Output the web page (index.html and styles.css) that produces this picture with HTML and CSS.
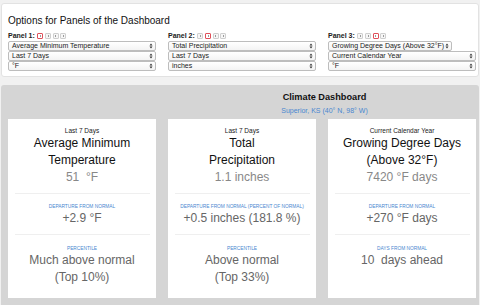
FILE: index.html
```html
<!DOCTYPE html>
<html>
<head>
<meta charset="utf-8">
<link rel="stylesheet" href="styles.css">
</head>
<body>
<div class="options">
  <h1 class="opt-title">Options for Panels of the Dashboard</h1>
  <div class="opt-grid">
    <div class="opt-col">
      <div class="panel-row"><span class="panel-label">Panel 1:</span><span class="btns"><span class="btn sel"><i></i></span><span class="btn"><i></i></span><span class="btn"><i></i></span><span class="btn"><i></i></span></span></div>
      <div class="sel-box">Average Minimum Temperature<svg class="arr" viewBox="0 0 4 6" width="4" height="6"><path d="M0.5 2.5 L2 0.5 L3.5 2.5 Z M0.5 3.5 L2 5.5 L3.5 3.5 Z"/></svg></div>
      <div class="sel-box">Last 7 Days<svg class="arr" viewBox="0 0 4 6" width="4" height="6"><path d="M0.5 2.5 L2 0.5 L3.5 2.5 Z M0.5 3.5 L2 5.5 L3.5 3.5 Z"/></svg></div>
      <div class="sel-box">°F<svg class="arr" viewBox="0 0 4 6" width="4" height="6"><path d="M0.5 2.5 L2 0.5 L3.5 2.5 Z M0.5 3.5 L2 5.5 L3.5 3.5 Z"/></svg></div>
    </div>
    <div class="opt-col">
      <div class="panel-row"><span class="panel-label">Panel 2:</span><span class="btns"><span class="btn"><i></i></span><span class="btn sel"><i></i></span><span class="btn"><i></i></span><span class="btn"><i></i></span></span></div>
      <div class="sel-box">Total Precipitation<svg class="arr" viewBox="0 0 4 6" width="4" height="6"><path d="M0.5 2.5 L2 0.5 L3.5 2.5 Z M0.5 3.5 L2 5.5 L3.5 3.5 Z"/></svg></div>
      <div class="sel-box">Last 7 Days<svg class="arr" viewBox="0 0 4 6" width="4" height="6"><path d="M0.5 2.5 L2 0.5 L3.5 2.5 Z M0.5 3.5 L2 5.5 L3.5 3.5 Z"/></svg></div>
      <div class="sel-box">inches<svg class="arr" viewBox="0 0 4 6" width="4" height="6"><path d="M0.5 2.5 L2 0.5 L3.5 2.5 Z M0.5 3.5 L2 5.5 L3.5 3.5 Z"/></svg></div>
    </div>
    <div class="opt-col">
      <div class="panel-row"><span class="panel-label">Panel 3:</span><span class="btns"><span class="btn"><i></i></span><span class="btn"><i></i></span><span class="btn sel"><i></i></span><span class="btn"><i></i></span></span></div>
      <div class="sel-box narrow">Growing Degree Days (Above 32°F)<svg class="arr" viewBox="0 0 4 6" width="4" height="6"><path d="M0.5 2.5 L2 0.5 L3.5 2.5 Z M0.5 3.5 L2 5.5 L3.5 3.5 Z"/></svg></div>
      <div class="sel-box">Current Calendar Year<svg class="arr" viewBox="0 0 4 6" width="4" height="6"><path d="M0.5 2.5 L2 0.5 L3.5 2.5 Z M0.5 3.5 L2 5.5 L3.5 3.5 Z"/></svg></div>
      <div class="sel-box">°F<svg class="arr" viewBox="0 0 4 6" width="4" height="6"><path d="M0.5 2.5 L2 0.5 L3.5 2.5 Z M0.5 3.5 L2 5.5 L3.5 3.5 Z"/></svg></div>
    </div>
  </div>
</div>
<div class="dash">
  <div class="dash-head">
    <div class="dash-title">Climate Dashboard</div>
    <div class="dash-sub">Superior, KS (40° N, 98° W)</div>
  </div>
  <div class="cards">
    <div class="card">
      <div class="period">Last 7 Days</div>
      <div class="name">Average Minimum<br>Temperature</div>
      <div class="val light">51 &nbsp;°F</div>
      <div class="rule"></div>
      <div class="lbl">DEPARTURE FROM NORMAL</div>
      <div class="val">+2.9 °F</div>
      <div class="rule"></div>
      <div class="lbl">PERCENTILE</div>
      <div class="val">Much above normal<br>(Top 10%)</div>
    </div>
    <div class="card">
      <div class="period">Last 7 Days</div>
      <div class="name">Total<br>Precipitation</div>
      <div class="val light">1.1 inches</div>
      <div class="rule"></div>
      <div class="lbl">DEPARTURE FROM NORMAL (PERCENT OF NORMAL)</div>
      <div class="val">+0.5 inches (181.8 %)</div>
      <div class="rule"></div>
      <div class="lbl">PERCENTILE</div>
      <div class="val">Above normal<br>(Top 33%)</div>
    </div>
    <div class="card">
      <div class="period">Current Calendar Year</div>
      <div class="name">Growing Degree Days<br>(Above 32°F)</div>
      <div class="val light">7420 °F days</div>
      <div class="rule"></div>
      <div class="lbl">DEPARTURE FROM NORMAL</div>
      <div class="val">+270 °F days</div>
      <div class="rule"></div>
      <div class="lbl">DAYS FROM NORMAL</div>
      <div class="val">10 &nbsp;days ahead</div>
    </div>
  </div>
</div>
</body>
</html>
```
FILE: styles.css
```css
html, body {
  margin: 0;
  padding: 0;
}
body {
  background: #f1f1f1;
  font-family: "Liberation Sans", Arial, Helvetica, sans-serif;
  color: #111;
  width: 480px;
  height: 305px;
  overflow: hidden;
}
.options {
  margin: 3px 1px 0;
  background: #fff;
  border: 1px solid #e2e2e2;
  border-radius: 3px;
  padding: 11px 6px 5px;
  height: 74px;
  box-sizing: border-box;
}
.opt-title {
  margin: 0;
  font-size: 10px;
  line-height: 12px;
  font-weight: normal;
  color: #111;
}
.opt-grid {
  display: grid;
  grid-template-columns: 148px 148px 148px;
  column-gap: 12px;
  margin-top: 5px;
}
.opt-col {
  display: flex;
  flex-direction: column;
  align-items: flex-start;
}
.panel-row {
  display: flex;
  align-items: center;
  height: 8px;
  margin-bottom: 1px;
}
.panel-label {
  font-size: 7px;
  font-weight: bold;
  color: #222;
  line-height: 8px;
}
.btns {
  display: flex;
  gap: 1.7px;
  margin-left: 2.5px;
}
.btn {
  width: 6px;
  height: 6px;
  box-sizing: border-box;
  border: 1px solid #cfcfcf;
  background: #f6f6f6;
  border-radius: 1px;
  display: flex;
  align-items: center;
  justify-content: center;
}
.btn i {
  display: block;
  width: 1px;
  height: 2px;
  background: #9a9a9a;
}
.btn.sel {
  border-color: #e0505a;
  background: #fff;
}
.sel-box {
  position: relative;
  width: 148px;
  height: 10px;
  box-sizing: border-box;
  border: 1px solid #bdbdbd;
  border-radius: 2px;
  background: linear-gradient(#ffffff, #f3f3f3);
  font-size: 7px;
  line-height: 8px;
  padding-left: 3px;
  color: #222;
  white-space: nowrap;
}
.sel-box.narrow {
  width: 124px;
}
.arr {
  position: absolute;
  right: 2px;
  top: 1px;
  fill: #333;
}
.dash {
  margin: 8px 1px 0;
  background: #d5d5d5;
  border-radius: 3px 3px 0 0;
  padding: 7px 0 0 7px;
  height: 213px;
}
.dash-head {
  padding-left: 162px;
  text-align: center;
}
.dash-title {
  font-size: 9.2px;
  font-weight: bold;
  line-height: 11px;
  color: #111;
}
.dash-sub {
  margin-top: 2.5px;
  font-size: 7px;
  line-height: 9px;
  color: #4a87d0;
}
.cards {
  display: grid;
  grid-template-columns: 148px 148px 148px;
  column-gap: 12px;
  margin-top: 4.5px;
}
.card {
  background: #fff;
  height: 179px;
  box-sizing: border-box;
  padding-top: 7.5px;
  text-align: center;
}
.period {
  font-size: 6.5px;
  line-height: 8px;
  color: #222;
}
.name {
  font-size: 12px;
  line-height: 17px;
  color: #111;
}
.val {
  font-size: 12px;
  line-height: 17px;
  color: #666;
}
.val.light {
  color: #888;
}
.rule {
  height: 1px;
  background: #efefef;
  margin: 7px 6px 10.5px 7px;
}
.lbl {
  font-size: 4.8px;
  line-height: 6px;
  color: #4a87d0;
  white-space: nowrap;
}
```
